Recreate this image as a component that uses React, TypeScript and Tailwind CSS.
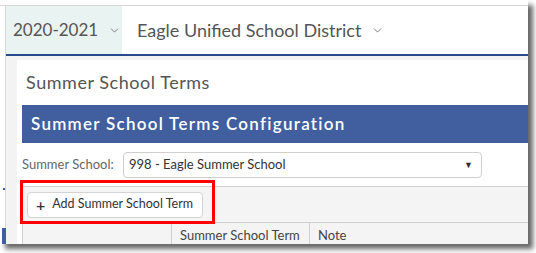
import { ChevronDown } from 'lucide-react';

const font = { fontFamily: 'Lato, "Open Sans", sans-serif' };

export default function App() {
  return (
    <div className="w-[536px] h-[253px] bg-white" style={font}>
      <div className="relative w-[528px] h-[244px] bg-white overflow-hidden shadow-[5px_5px_5px_rgba(0,0,0,0.6)]">
        {/* edge of the page behind */}
        <div className="absolute left-[3px] top-[188px] w-[2px] h-[2px] bg-[#3f5e9f]" />
        <div className="absolute left-[2px] top-[228px] w-[4px] h-[18px] bg-[#3f5e9f]" />

        <div className="pt-[5px] h-full flex flex-col">
          <div className="flex-1 flex border-t border-[#d8d8d8] min-h-0">
            <div className="w-[6px] border-r border-[#d8d8d8]" />
            <div className="flex-1 flex flex-col min-w-0">
              {/* top bar */}
              <div className="h-[50px] shrink-0 flex items-stretch border-b-[2px] border-[#284a8e] text-[#555] text-[18px] whitespace-nowrap">
                <div className="w-[116px] shrink-0 bg-[#e9f3f2] flex items-center pl-[7px] gap-[10px]">
                  <span className="text-[17px]">2020-2021</span>
                  <ChevronDown className="w-[13px] h-[13px] shrink-0 text-[#666]" strokeWidth={1.5} />
                </div>
                <div className="flex items-center pl-[15px] gap-[10px]">
                  <span>Eagle Unified School District</span>
                  <ChevronDown className="w-[13px] h-[13px] shrink-0 text-[#666]" strokeWidth={1.5} />
                </div>
              </div>

              {/* page */}
              <div className="flex-1 bg-[#f3f3f3] pl-[11px] pt-[4px] min-h-0">
                <div className="h-full bg-white pl-[5px] flex flex-col overflow-hidden whitespace-nowrap">
                  <div className="h-[45px] shrink-0 flex items-center pl-[4px] text-[18px] tracking-[0.03em] text-[#555]">
                    Summer School Terms
                  </div>
                  <div className="h-[38px] shrink-0 bg-[#415f9f] flex items-center pl-[9px] text-white text-[17px] font-semibold tracking-[0.075em]">
                    Summer School Terms Configuration
                  </div>
                  <div className="h-[44px] shrink-0 flex items-center border-b border-[#cfcfcf]">
                    <span className="w-[101px] text-[13px] text-[#666]">Summer School:</span>
                    <div className="w-[359px] h-[26px] border border-[#d0d0d0] rounded-[4px] flex items-center justify-between pl-[5px] pr-[8px] text-[13px] text-[#333]">
                      <span>998 - Eagle Summer School</span>
                      <span className="text-[9px] text-[#333]">▼</span>
                    </div>
                  </div>
                  <div className="flex-1 min-h-0 bg-[#f4f4f4] flex flex-col">
                    <div className="h-[35px] shrink-0 flex items-center pl-[5px]">
                      <button className="w-[176px] h-[26px] bg-white border border-[#d4d4d4] rounded-[4px] flex items-center pl-[8px] gap-[7px] text-[12.5px] text-[#333]">
                        <span className="text-[16px] leading-none font-semibold text-[#333]">+</span>
                        <span>Add Summer School Term</span>
                      </button>
                    </div>
                    <div className="flex-1 min-h-0 flex border-t border-l border-[#cfcfcf] text-[13px] text-[#444]">
                      <div className="w-[149px] border-r border-[#cfcfcf]" />
                      <div className="w-[138px] border-r border-[#cfcfcf] pl-[8px] pt-[6px] leading-none">Summer School Term</div>
                      <div className="pl-[8px] pt-[6px] leading-none">Note</div>
                    </div>
                  </div>
                </div>
              </div>
            </div>
          </div>
        </div>

        {/* highlight */}
        <div className="absolute left-[20px] top-[180px] w-[195px] h-[44px] border-[3px] border-[#ff0000]" />
      </div>
    </div>
  );
}
